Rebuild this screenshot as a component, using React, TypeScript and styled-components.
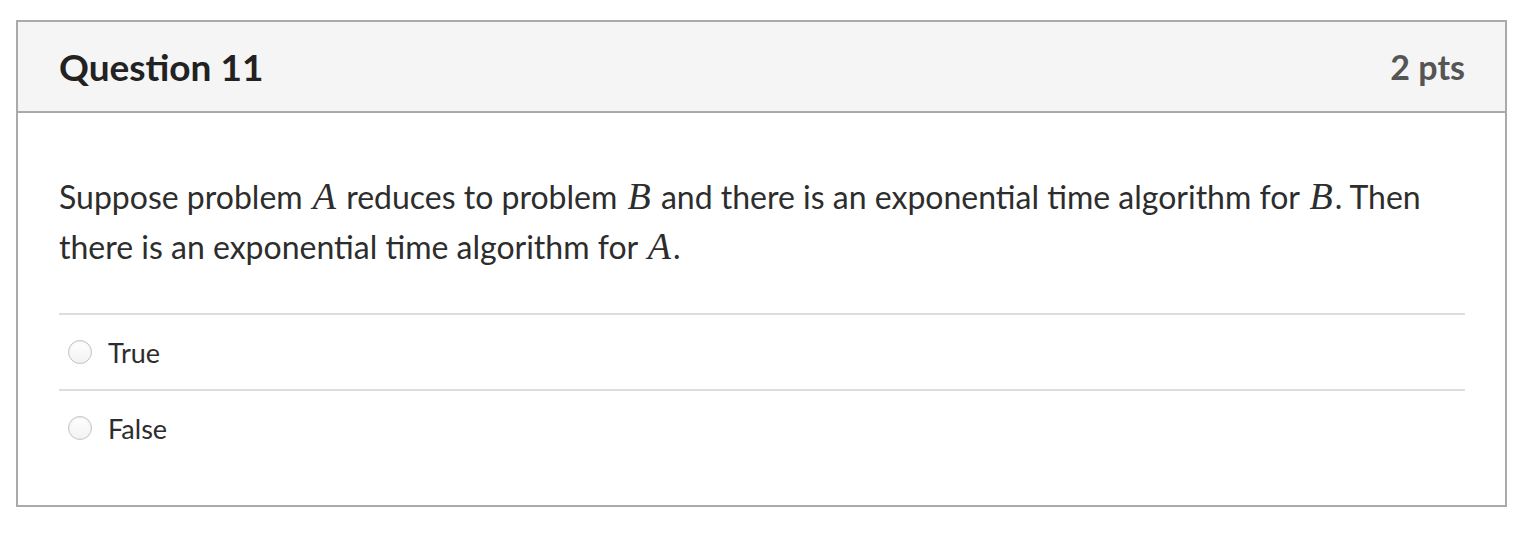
import React from "react"
import styled, { createGlobalStyle } from "styled-components"

const GlobalStyle = createGlobalStyle`
  html, body {
    margin: 0;
    padding: 0;
    background: #ffffff;
  }
  body {
    font-family: Lato, "Liberation Sans", sans-serif;
    color: #2d2d2d;
  }
`

const Page = styled.div`
  padding: 20px 20px 0 16px;
`

const Card = styled.section`
  width: 1491px;
  box-sizing: border-box;
  border: 2px solid #aaaaaa;
  background: #ffffff;
`

const Header = styled.header`
  display: flex;
  align-items: center;
  justify-content: space-between;
  height: 89px;
  padding: 0 40px 0 41px;
  background: #f5f5f5;
  border-bottom: 2px solid #aaaaaa;
`

const Title = styled.h2`
  margin: 0;
  font-size: 37px;
  font-weight: 700;
  color: #222222;
`

const Points = styled.span`
  font-size: 34px;
  font-weight: 700;
  color: #555555;
`

const Body = styled.div`
  padding: 59px 40px 40px 41px;
`

const Prompt = styled.p`
  margin: 0 0 41px;
  font-size: 32px;
  line-height: 50px;
  color: #2d2d2d;
`

const MathVar = styled.span`
  font-family: "Liberation Serif", "DejaVu Serif", serif;
  font-style: italic;
  font-size: 38px;
  line-height: 1;
  padding: 0 2px 0 2px;
`

const Answers = styled.div`
  display: flex;
  flex-direction: column;
`

const AnswerRow = styled.label`
  display: flex;
  align-items: center;
  gap: 16px;
  height: 74px;
  padding-left: 9px;
  border-top: 2px solid #dddddd;
  font-size: 27px;
  color: #2d2d2d;
`

const Radio = styled.span`
  width: 24px;
  height: 24px;
  box-sizing: border-box;
  border-radius: 50%;
  border: 1px solid #c4c4c4;
  background: linear-gradient(#ffffff, #f2f2f2);
  box-shadow: inset 0 1px 2px rgba(0, 0, 0, 0.08);
`

const answers = ["True", "False"]

export default function App() {
  return (
    <Page>
      <GlobalStyle />
      <Card>
        <Header>
          <Title>Question 11</Title>
          <Points>2 pts</Points>
        </Header>
        <Body>
          <Prompt>
            Suppose problem <MathVar>A</MathVar> reduces to problem <MathVar>B</MathVar> and there is an
            exponential time algorithm for <MathVar>B</MathVar>. Then there is an exponential time algorithm
            for <MathVar>A</MathVar>.
          </Prompt>
          <Answers>
            {answers.map(a => (
              <AnswerRow key={a}>
                <Radio />
                {a}
              </AnswerRow>
            ))}
          </Answers>
        </Body>
      </Card>
    </Page>
  )
}
